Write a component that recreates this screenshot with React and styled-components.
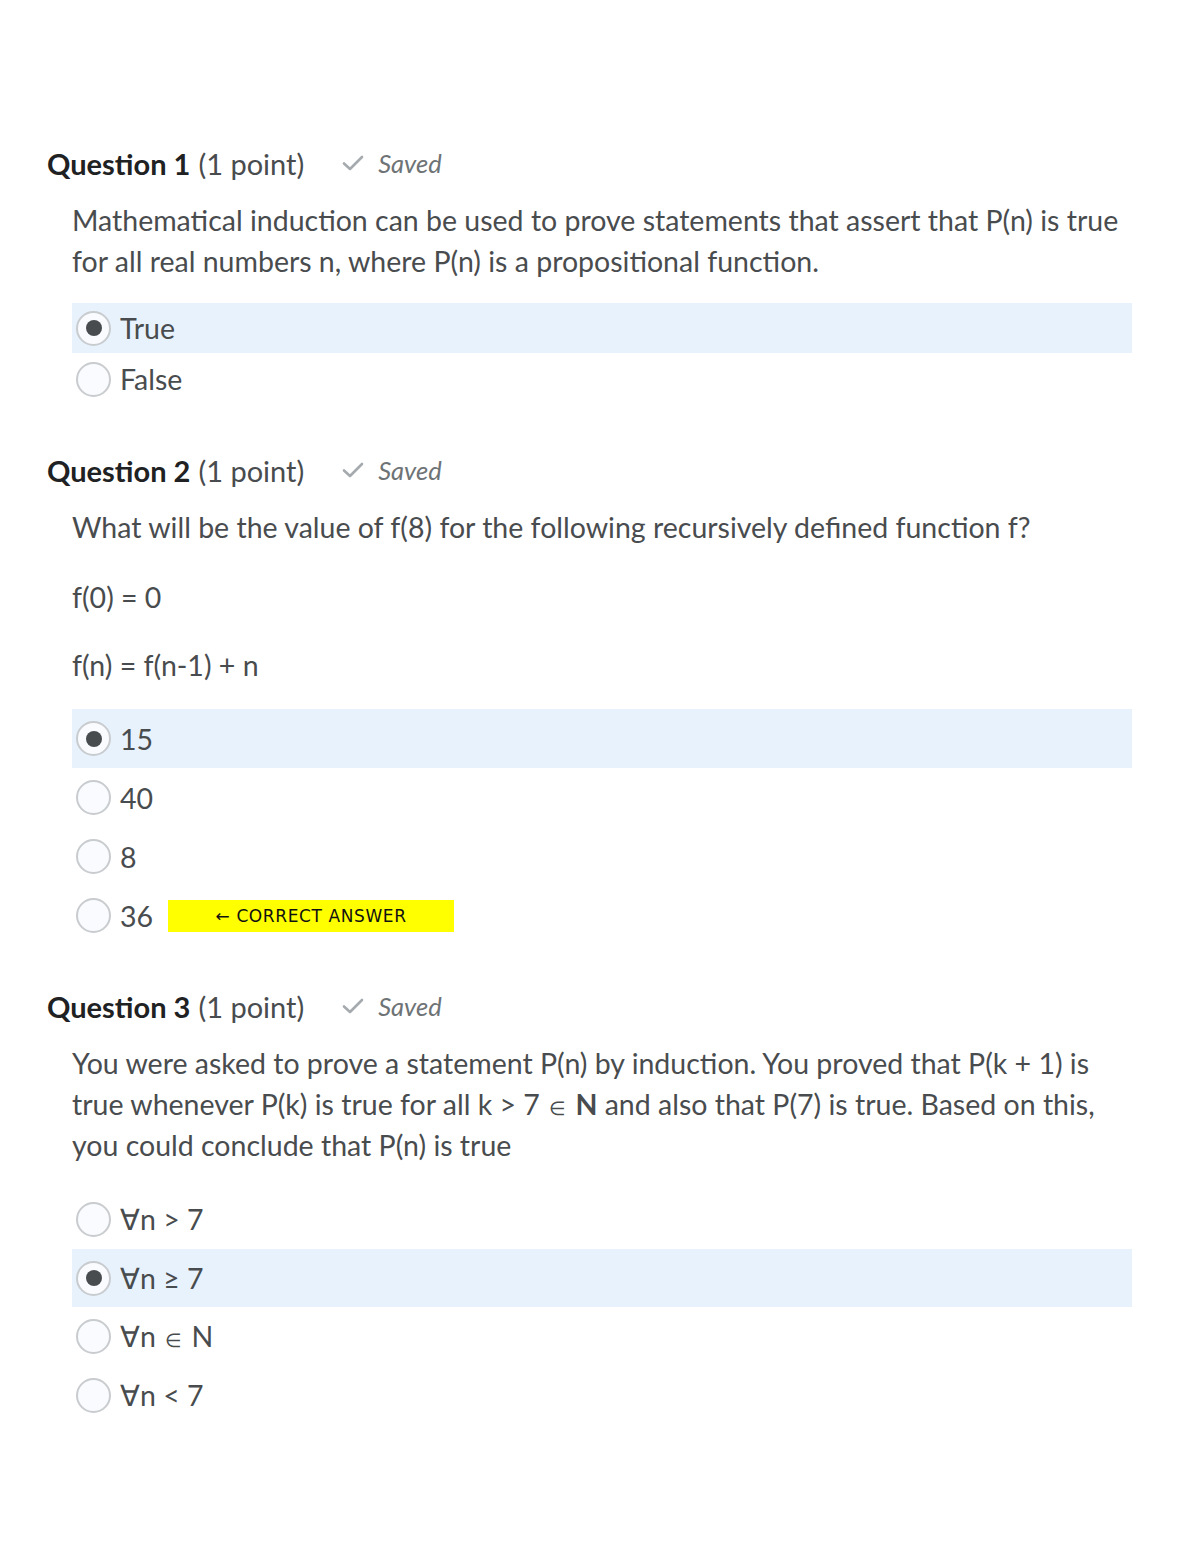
import React from "react";
import styled, { createGlobalStyle } from "styled-components";

const GlobalStyle = createGlobalStyle`
  body {
    margin: 0;
    background: #ffffff;
    font-family: Lato, "Noto Sans", sans-serif;
    color: #494c4e;
  }
`;

const Page = styled.div`
  width: 1200px;
  min-height: 1553px;
  box-sizing: border-box;
  padding: 143px 68px 0 47px;
  display: flex;
  flex-direction: column;
`;

const Question = styled.section`
  display: flex;
  flex-direction: column;
  margin-top: ${(p) => p.$top || 0}px;
`;

const Heading = styled.div`
  display: flex;
  align-items: center;
  height: 40px;
  font-size: 29px;
`;

const Title = styled.span`
  font-weight: 700;
  color: #202122;
`;

const Points = styled.span`
  margin-left: 8px;
  color: #494c4e;
`;

const SavedTag = styled.span`
  display: flex;
  align-items: center;
  margin-left: 38px;
  gap: 14px;
  font-size: 25.5px;
  font-style: italic;
  color: #6e7376;
`;

const Body = styled.div`
  padding-left: 25px;
`;

const Stem = styled.p`
  margin: 17px 0 0;
  font-size: 28.5px;
  line-height: 41px;
`;

const Formula = styled.p`
  margin: ${(p) => p.$gap}px 0 0;
  font-size: 28.5px;
  line-height: 41px;
`;

const Sym = styled.span`
  font-size: 19px;
  line-height: 1;
  padding: 0 2px;
`;

const Options = styled.div`
  margin-top: ${(p) => p.$top || 22}px;
  display: flex;
  flex-direction: column;
`;

const Option = styled.label`
  display: flex;
  align-items: center;
  height: ${(p) => p.$h}px;
  padding-left: 4px;
  background: ${(p) => (p.$selected ? "#e8f2fd" : "transparent")};
  font-size: 28.5px;
  color: #494c4e;
`;

const Radio = styled.span`
  width: 35px;
  height: 35px;
  box-sizing: border-box;
  border-radius: 50%;
  border: 2px solid #c9cccf;
  background: #f9fbff;
  display: flex;
  align-items: center;
  justify-content: center;
  margin-right: 9px;
  flex-shrink: 0;

  &::after {
    content: "";
    width: 16px;
    height: 16px;
    border-radius: 50%;
    background: #494c4e;
    display: ${(p) => (p.$checked ? "block" : "none")};
  }
`;

const Marker = styled.span`
  margin-left: 15px;
  width: 286px;
  height: 32px;
  background: #ffff00;
  color: #111111;
  font-family: "DejaVu Sans", sans-serif;
  font-size: 17px;
  display: flex;
  align-items: center;
  justify-content: center;
  letter-spacing: 0.6px;
`;

const Check = () => (
  <svg width="22" height="18" viewBox="0 0 22 18">
    <path
      d="M2 9.5 L8 15 L20 3"
      fill="none"
      stroke="#a5aaae"
      strokeWidth="2.6"
      strokeLinecap="round"
      strokeLinejoin="round"
    />
  </svg>
);

const QuestionHead = ({ n }) => (
  <Heading>
    <Title>Question {n}</Title>
    <Points>(1 point)</Points>
    <SavedTag>
      <Check />
      Saved
    </SavedTag>
  </Heading>
);

const Choice = ({ label, selected, h, children }) => (
  <Option $selected={selected} $h={h}>
    <Radio $checked={selected} />
    {label}
    {children}
  </Option>
);

export default function App() {
  return (
    <>
      <GlobalStyle />
      <Page>
        <Question>
          <QuestionHead n={1} />
          <Body>
            <Stem>
              Mathematical induction can be used to prove statements that assert that P(n) is true
              for all real numbers n, where P(n) is a propositional function.
            </Stem>
            <Options $top={21}>
              <Choice label="True" selected h={50} />
              <Choice label="False" h={52} />
            </Options>
          </Body>
        </Question>

        <Question $top={45}>
          <QuestionHead n={2} />
          <Body>
            <Stem>What will be the value of f(8) for the following recursively defined function f?</Stem>
            <Formula $gap={29}>f(0) = 0</Formula>
            <Formula $gap={27}>f(n) = f(n-1) + n</Formula>
            <Options $top={23}>
              <Choice label="15" selected h={59} />
              <Choice label="40" h={59} />
              <Choice label="8" h={59} />
              <Choice label="36" h={59}>
                <Marker>← CORRECT ANSWER</Marker>
              </Choice>
            </Options>
          </Body>
        </Question>

        <Question $top={41}>
          <QuestionHead n={3} />
          <Body>
            <Stem>
              You were asked to prove a statement P(n) by induction. You proved that P(k + 1) is
              true whenever P(k) is true for all k &gt; 7 <Sym>∈</Sym> <b>N</b> and also that P(7) is true. Based on this,
              you could conclude that P(n) is true
            </Stem>
            <Options $top={24}>
              <Choice label="∀n > 7" h={59} />
              <Choice label="∀n ≥ 7" selected h={58} />
              <Choice label={<span>∀n <Sym>∈</Sym> N</span>} h={59} />
              <Choice label="∀n < 7" h={59} />
            </Options>
          </Body>
        </Question>
      </Page>
    </>
  );
}
